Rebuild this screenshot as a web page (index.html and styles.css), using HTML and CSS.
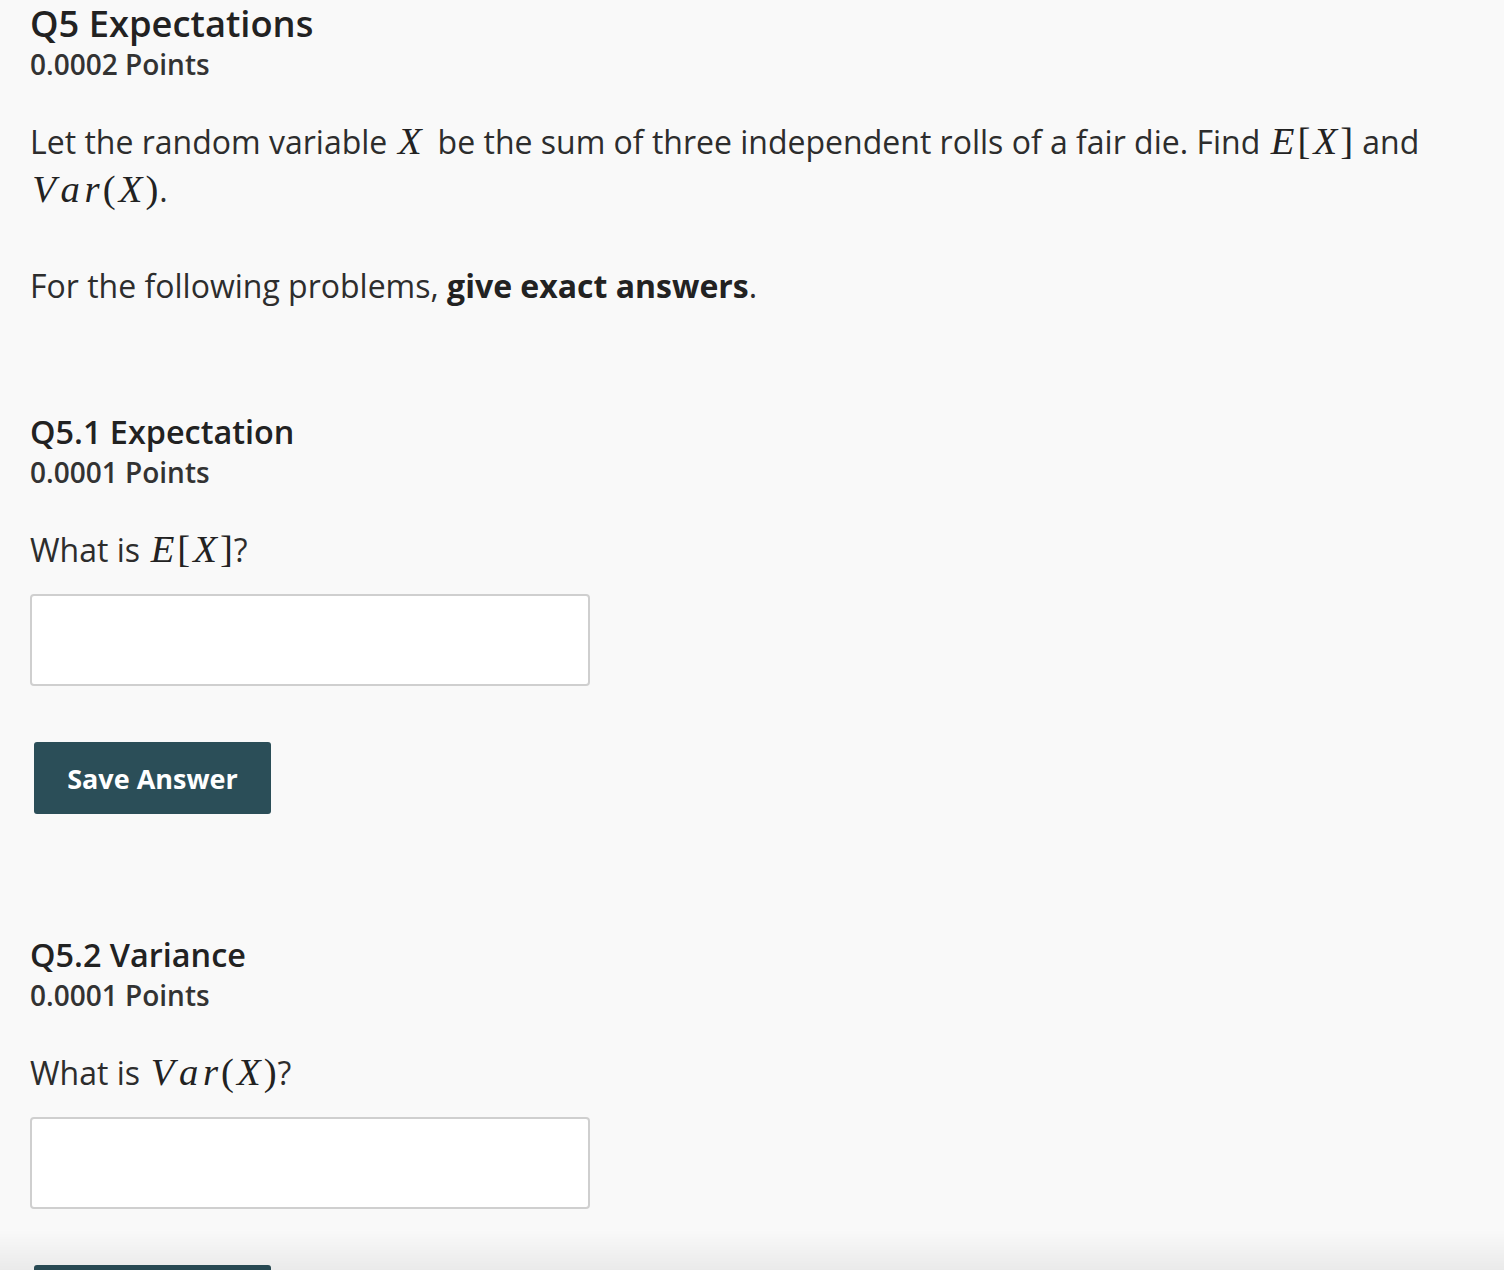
FILE: index.html
```html
<!DOCTYPE html>
<html>
<head>
<meta charset="utf-8">
<link rel="stylesheet" href="styles.css">
</head>
<body>
<main class="page">
  <section class="question">
    <h1 class="q-title">Q5 Expectations</h1>
    <div class="q-points">0.0002 Points</div>
    <p class="q-text intro">Let the random variable <span class="m"><i class="x">X</i></span> be the sum of three independent rolls of a fair die. Find <span class="m"><i>E</i><span class="r">[</span><i>X</i><span class="r">]</span></span> and <span class="m"><i>V</i><i>a</i><i>r</i><span class="r">(</span><i>X</i><span class="r">)</span></span>.</p>
    <p class="q-text instr">For the following problems, <b>give exact answers</b>.</p>
  </section>

  <section class="sub first">
    <h2 class="s-title">Q5.1 Expectation</h2>
    <div class="q-points">0.0001 Points</div>
    <p class="q-text ask">What is <span class="m"><i>E</i><span class="r">[</span><i>X</i><span class="r">]</span></span>?</p>
    <input class="answer" type="text">
    <button class="save">Save Answer</button>
  </section>

  <section class="sub second">
    <h2 class="s-title">Q5.2 Variance</h2>
    <div class="q-points">0.0001 Points</div>
    <p class="q-text ask">What is <span class="m"><i>V</i><i>a</i><i>r</i><span class="r">(</span><i>X</i><span class="r">)</span></span>?</p>
    <input class="answer" type="text">
    <button class="save">Save Answer</button>
  </section>
</main>
<div class="bottom-shade"></div>
</body>
</html>
```
FILE: styles.css
```css
html, body {
  margin: 0;
  padding: 0;
  background: #f9f9f9;
}
body {
  font-family: "Open Sans", "Noto Sans", sans-serif;
  color: #222;
}
.page {
  padding: 1px 30px 0;
}
.q-title {
  margin: 0;
  font-size: 36.3px;
  font-weight: 600;
  line-height: 44px;
  color: #222;
}
.q-points {
  font-size: 28px;
  font-weight: 600;
  line-height: 38px;
  color: #333;
}
.q-text {
  margin: 0;
  font-size: 32px;
  line-height: 48px;
  color: #2d2d2d;
}
.intro {
  margin-top: 35px;
}
.instr {
  margin-top: 48px;
}
.instr b {
  font-weight: 700;
  color: #222;
}
.m {
  font-family: "Liberation Serif", "DejaVu Serif", serif;
  font-size: 1.21em;
  line-height: 1;
  color: #222;
}
.m i {
  font-style: italic;
  padding: 0 0.06em;
}
.m i.x {
  padding-right: 0.2em;
}
.m .r {
  font-style: normal;
  padding: 0 0.02em;
}
.sub {
  display: flex;
  flex-direction: column;
  align-items: flex-start;
}
.first {
  margin-top: 99px;
}
.second {
  margin-top: 118px;
}
.s-title {
  margin: 0;
  font-size: 32.4px;
  font-weight: 600;
  line-height: 44px;
  color: #222;
}
.ask {
  margin-top: 35px;
}
.answer {
  margin: 20px 0 0;
  box-sizing: border-box;
  width: 560px;
  height: 92px;
  background: #fff;
  border: 2px solid #cfcfcf;
  border-radius: 4px;
  outline: none;
}
.save {
  margin: 56px 0 0 4px;
  width: 237px;
  height: 72px;
  padding: 0;
  background: #2b4e58;
  color: #fff;
  border: none;
  border-radius: 3px;
  font-family: "Open Sans", "Noto Sans", sans-serif;
  font-size: 27px;
  font-weight: 700;
}
.bottom-shade {
  position: fixed;
  left: 0;
  right: 0;
  bottom: 0;
  height: 40px;
  background: linear-gradient(to bottom, rgba(0,0,0,0), rgba(0,0,0,0.06));
  pointer-events: none;
}
```
